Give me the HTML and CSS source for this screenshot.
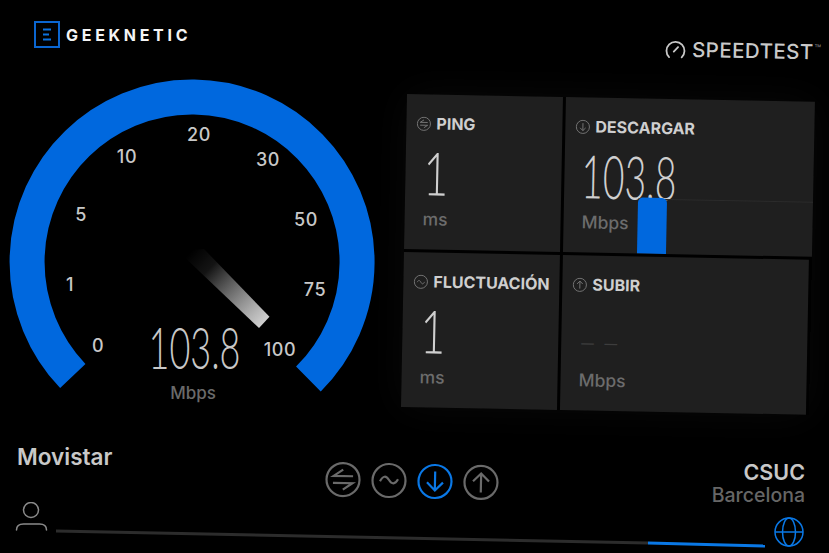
FILE: index.html
```html
<!DOCTYPE html>
<html lang="es">
<head>
<meta charset="utf-8">
<title>Speedtest</title>
<link rel="stylesheet" href="styles.css">
</head>
<body>
<div class="page">
  <header class="top">
    <div class="brand">
      <svg class="brand-mark" width="26" height="27" viewBox="0 0 26 27">
        <rect x="1" y="1" width="24" height="25" fill="none" stroke="#0b66d0" stroke-width="2"/>
        <path d="M9 8.5h8M9 13.5h6M9 18.5h8" stroke="#0b72e0" stroke-width="2"/>
      </svg>
      <span class="brand-name">GEEKNETIC</span>
    </div>
    <div class="speedtest">
      <svg width="21" height="20" viewBox="0 0 21 20">
        <path d="M4.2 17.4A9 9 0 1 1 16.8 17.4" fill="none" stroke="#c8c8c8" stroke-width="1.8" stroke-linecap="round"/>
        <path d="M8.8 11.8L13 7.2" stroke="#c8c8c8" stroke-width="1.8" stroke-linecap="round"/>
      </svg>
      <span class="speedtest-name">SPEEDTEST</span><span class="tm">TM</span>
    </div>
  </header>

  <main class="main">
    <svg class="gauge" width="400" height="355" viewBox="0 79 400 355">
      <defs>
        <linearGradient id="needle" gradientUnits="userSpaceOnUse" x1="192" y1="250" x2="265" y2="322">
          <stop offset="0" stop-color="#fff" stop-opacity="0"/>
          <stop offset="0.25" stop-color="#fff" stop-opacity="0.08"/>
          <stop offset="1" stop-color="#d0d0d0"/>
        </linearGradient>
      </defs>
      <path d="M72.8 376A165 165 0 1 1 308.4 379" fill="none" stroke="#0068de" stroke-width="35"/>
      <polygon points="178,251 204,249 269.5,316.7 259,328" fill="url(#needle)"/>
      <g class="tick">
        <text x="98" y="352">0</text>
        <text x="70" y="291">1</text>
        <text x="81" y="221">5</text>
        <text x="127" y="163">10</text>
        <text x="199" y="141">20</text>
        <text x="268" y="166">30</text>
        <text x="306" y="226">50</text>
        <text x="315" y="296">75</text>
        <text x="280" y="356">100</text>
      </g>
      <text class="gauge-value" x="194.500" y="369" textLength="92" lengthAdjust="spacingAndGlyphs">103.8</text>
      <text class="gauge-unit" x="193" y="399">Mbps</text>
    </svg>

    <section class="panel">
      <article class="tile">
        <h2 class="tile-title">
          <svg class="tile-icon" viewBox="0 0 16 16"><circle cx="8" cy="8" r="7"/><path d="M12 6.500H4L8 3.800M4 9.500h8L8 12.200"/></svg>PING
        </h2>
        <div class="num num-one">1</div>
        <div class="unit">ms</div>
      </article>
      <article class="tile">
        <h2 class="tile-title">
          <svg class="tile-icon" viewBox="0 0 16 16"><circle cx="8" cy="8" r="7"/><path d="M8 4v8M5 9l3 3 3-3"/></svg>DESCARGAR
        </h2>
        <div class="num num-wide">103.8</div>
        <div class="unit">Mbps</div>
        <div class="graph-line"></div>
        <div class="graph-bar"></div>
      </article>
      <article class="tile">
        <h2 class="tile-title">
          <svg class="tile-icon" viewBox="0 0 16 16"><circle cx="8" cy="8" r="7"/><path d="M4 8.500c1.500-2.500 2.500-2.500 4 0s2.500 2 4-.5"/></svg>FLUCTUACIÓN
        </h2>
        <div class="num num-one">1</div>
        <div class="unit">ms</div>
      </article>
      <article class="tile tile-narrow">
        <h2 class="tile-title">
          <svg class="tile-icon" viewBox="0 0 16 16"><circle cx="8" cy="8" r="7"/><path d="M8 12V4M5 7l3-3 3 3"/></svg>SUBIR
        </h2>
        <div class="num num-dash">– –</div>
        <div class="unit">Mbps</div>
      </article>
    </section>
  </main>

  <footer class="bottom">
    <svg class="route" width="829" height="119" viewBox="0 434 829 119">
      <path d="M56 531L648 543" stroke="#2c2c2c" stroke-width="3"/>
      <path d="M648 543L765 546" stroke="#0a78e6" stroke-width="3"/>
    </svg>
    <div class="isp">
      <div class="isp-name">Movistar</div>
      <svg class="person" width="34" height="31" viewBox="0 0 34 31">
        <circle cx="16" cy="8" r="7.500" fill="none" stroke="#8a8a8a" stroke-width="1.500"/>
        <path d="M1.500 28c0-4 3-6 7-6h16c4 0 7 2 7 6" fill="none" stroke="#8a8a8a" stroke-width="1.500" stroke-linecap="round"/>
      </svg>
    </div>
    <div class="modes">
      <svg class="mode" viewBox="0 0 36 36"><circle cx="18" cy="18" r="16.500"/><path d="M28 14.500H8.500L18 8M8 21.500h19.500L18 28"/></svg>
      <svg class="mode" viewBox="0 0 36 36"><circle cx="18" cy="18" r="16.500"/><path d="M9 19c3-6 6-6 9-1.500s6 4.500 9-1"/></svg>
      <svg class="mode mode-on" viewBox="0 0 36 36"><circle cx="18" cy="18" r="16.500"/><path d="M18 8v19M10 19l8 8 8-8"/></svg>
      <svg class="mode" viewBox="0 0 36 36"><circle cx="18" cy="18" r="16.500"/><path d="M18 28V9M10 17l8-8 8 8"/></svg>
    </div>
    <div class="server">
      <div class="server-name">CSUC</div>
      <div class="server-city">Barcelona</div>
      <svg class="globe" width="30" height="30" viewBox="0 0 30 30">
        <circle cx="15" cy="15" r="14"/>
        <ellipse cx="15" cy="15" rx="6.500" ry="14"/>
        <path d="M1 15h28"/>
      </svg>
    </div>
  </footer>
</div>
</body>
</html>
```
FILE: styles.css
```css
* {
  box-sizing: border-box;
}

html,
body {
  margin: 0;
  background: #000;
}

.page {
  width: 829px;
  height: 553px;
  overflow: hidden;
  display: flex;
  flex-direction: column;
  font-family: Inter, "Liberation Sans", sans-serif;
  color: #ccc;
}

/* Header */
.top {
  height: 79px;
  flex: none;
  display: flex;
  justify-content: space-between;
  align-items: flex-start;
  padding: 21px 8px 0 34px;
}

.brand {
  display: flex;
  align-items: center;
  gap: 6px;
}

.brand-mark {
  display: block;
}

.brand-name {
  font-size: 16px;
  font-weight: 700;
  letter-spacing: 3.700px;
  color: #f4f4f4;
  white-space: nowrap;
}

.speedtest {
  display: flex;
  align-items: center;
  gap: 6px;
  margin-top: 17px;
  transform: rotate(1deg);
}

.speedtest-name {
  font-size: 20.500px;
  font-weight: 500;
  letter-spacing: .45px;
  color: #c9c9c9;
}

.tm {
  font-size: 4px;
  margin: -12px 0 0 -5px;
  color: #aaa;
}

/* Main */
.main {
  height: 355px;
  flex: none;
  display: flex;
  align-items: flex-start;
}

.gauge {
  display: block;
  flex: none;
  margin-right: 7px;
}

.tick text {
  font-size: 18px;
  font-weight: 500;
  letter-spacing: .6px;
  fill: #c8c8c8;
  text-anchor: middle;
}

.gauge-value {
  font-family: Lato, sans-serif;
  font-size: 58px;
  font-weight: 300;
  fill: #c8c8c8;
  text-anchor: middle;
}

.gauge-unit {
  font-size: 17px;
  font-weight: 500;
  fill: #6a6a6a;
  text-anchor: middle;
}

.panel {
  margin-top: 15px;
  display: grid;
  grid-template-columns: 156px 249px;
  grid-template-rows: 155px 155px;
  gap: 3px;
  transform: rotate(1.1deg);
  transform-origin: 0 0;
  box-shadow: 0 0 40px rgba(255, 255, 255, .035);
}

.tile {
  position: relative;
  background: #1f1f1f;
  padding: 21px 0 0 10px;
  overflow: hidden;
}

.tile-narrow {
  margin-right: 3px;
}

.tile-title {
  margin: 0;
  height: 16px;
  display: flex;
  align-items: center;
  gap: 5px;
  font-size: 16px;
  font-weight: 700;
  line-height: 16px;
  color: #cfcfcf;
  white-space: nowrap;
}

.tile-icon {
  width: 15px;
  height: 15px;
  flex: none;
  fill: none;
  stroke: #787878;
  stroke-width: 1;
}

.num {
  height: 52px;
  margin: 15px 0 0 8px;
  font-family: Lato, sans-serif;
  font-size: 60px;
  font-weight: 300;
  line-height: 52px;
  color: #cfcfcf;
  transform-origin: 0 50%;
}

.num-one {
  transform: scaleX(.72);
}

.num-wide {
  margin-left: 7px;
  transform: scaleX(.62);
}

.num-dash {
  margin-top: 17px;
  margin-bottom: -2px;
  padding-top: 9px;
  font-family: Roboto, sans-serif;
  font-size: 26px;
  color: #3d3d3d;
}

.unit {
  margin: 11px 0 0 8px;
  font-size: 17.500px;
  font-weight: 500;
  line-height: 20px;
  color: #6c6c6c;
}

.graph-line {
  position: absolute;
  left: 74px;
  right: 0;
  top: 100px;
  height: 1px;
  background: #2b2b2b;
}

.graph-bar {
  position: absolute;
  left: 74px;
  top: 99px;
  width: 29px;
  bottom: 0;
  background: #0068de;
  border-radius: 5px 5px 0 0;
}

/* Footer */
.bottom {
  position: relative;
  flex: 1;
  display: flex;
}

.route {
  position: absolute;
  left: 0;
  top: 0;
}

.isp {
  width: 325px;
  flex: none;
  padding: 11px 0 0 15px;
}

.isp-name {
  font-size: 22.500px;
  font-weight: 600;
  line-height: 24px;
  color: #c8c8c8;
  padding-left: 2px;
}

.person {
  display: block;
  margin: 33px 0 0 0;
}

.modes {
  display: flex;
  gap: 10px;
  height: 36px;
  margin-top: 29px;
  transform: rotate(1.2deg);
}

.mode {
  width: 36px;
  height: 36px;
  fill: none;
  stroke: #6a6a6a;
  stroke-width: 2.200;
}

.mode-on {
  stroke: #0a78e6;
}

.server {
  flex: 1;
  padding: 26px 24px 0 0;
  text-align: right;
  display: flex;
  flex-direction: column;
  align-items: flex-end;
}

.server-name {
  font-size: 21.500px;
  font-weight: 600;
  line-height: 24px;
  color: #c8c8c8;
}

.server-city {
  font-size: 19.500px;
  font-weight: 500;
  line-height: 22px;
  color: #666;
}

.globe {
  display: block;
  margin: 11px 1px 0 0;
  fill: none;
  stroke: #0a78e6;
  stroke-width: 1.500;
}
```
